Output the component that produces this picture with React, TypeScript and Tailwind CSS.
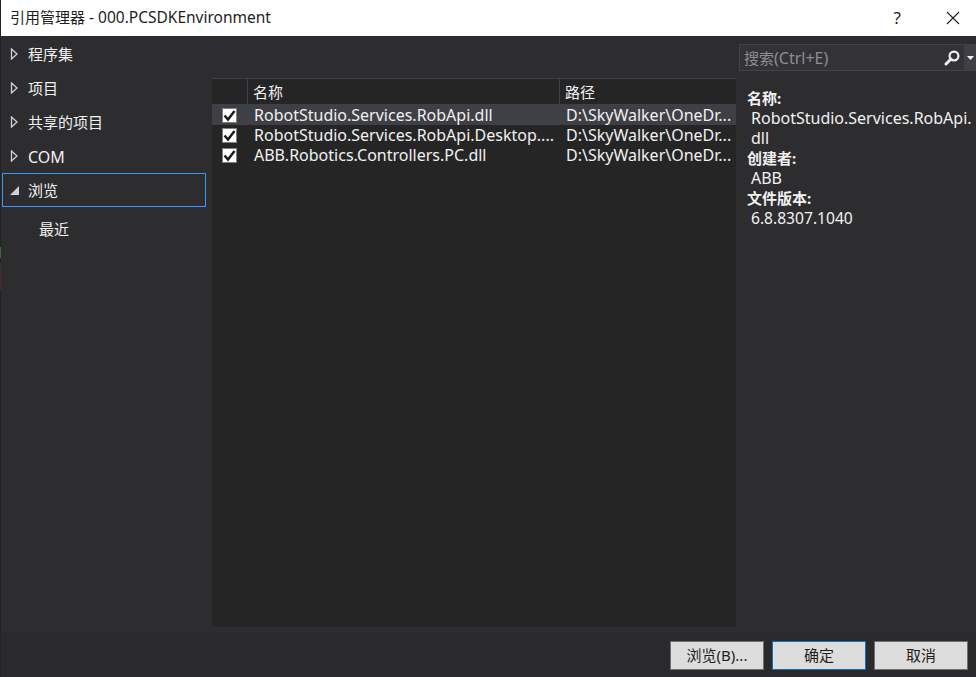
const font = 'font-["Noto_Sans","Noto_Sans_CJK_SC",sans-serif]';

const navItems = ['程序集', '项目', '共享的项目'];

// 列表里的文字按截图原样显示省略号
const rows = [
  { name: 'RobotStudio.Services.RobApi.dll', selected: true },
  { name: 'RobotStudio.Services.RobApi.Desktop....', selected: false },
  { name: 'ABB.Robotics.Controllers.PC.dll', selected: false },
];

function Caret() {
  return (
    <svg width="9" height="12" viewBox="0 0 9 12" className="shrink-0">
      <path d="M1.5 1 L7 6 L1.5 11 Z" fill="none" stroke="#d0d0d0" strokeWidth="1.3" />
    </svg>
  );
}

function NavRow({ label, latin }: { label: string; latin?: boolean }) {
  return (
    <div className="h-[34px] flex items-center pl-[8px] gap-[9px]">
      <Caret />
      <span className={`pt-[1px] ${latin ? 'text-[16px]' : ''}`}>{label}</span>
    </div>
  );
}

function NavList() {
  return (
    <div className="w-[211px] shrink-0 flex flex-col pl-[1px] pr-[6px] pt-[1px]">
      {navItems.map((label) => (
        <NavRow key={label} label={label} />
      ))}
      <NavRow label="COM" latin />
      <div className="h-[34px] flex items-center pl-[7px] gap-[9px] border border-[#3399ff]">
        <svg width="9" height="9" viewBox="0 0 9 9" className="shrink-0">
          <path d="M0 9 L9 9 L9 0 Z" fill="#d0d0d0" />
        </svg>
        <span className="pt-[1px]">浏览</span>
      </div>
      <div className="h-[44px] flex items-center pl-[37px] pt-[1px]">最近</div>
    </div>
  );
}

function FileTable() {
  return (
    <div className="flex-1 min-w-0 flex flex-col bg-[#252526] mt-[42px] mb-[6px]">
      <div className="h-[27px] shrink-0 flex border-t border-b border-[#3f3f46]">
        <div className="w-[36px] shrink-0 border-r border-[#3f3f46]" />
        <div className="w-[312px] shrink-0 border-r border-[#3f3f46] pl-[5px] leading-[26px]">名称</div>
        <div className="flex-1 pl-[5px] leading-[26px]">路径</div>
      </div>
      {rows.map((row) => (
        <div key={row.name} className={`h-[20px] flex items-center text-[16px] whitespace-nowrap ${row.selected ? 'bg-[#3f3f46]' : ''}`}>
          <div className="w-[35px] shrink-0 flex justify-center pr-[1px]">
            <div className="w-[15px] h-[15px] bg-white border border-[#808080] flex items-center justify-center">
              <svg width="13" height="13" viewBox="0 0 13 13">
                <path d="M1.5 6.5 L5 10.5 L11.5 2" fill="none" stroke="#1a1a1a" strokeWidth="2.4" />
              </svg>
            </div>
          </div>
          <div className="w-[312px] shrink-0 pl-[7px]">{row.name}</div>
          <div className="flex-1 min-w-0 pl-[7px]">D:\SkyWalker\OneDr...</div>
        </div>
      ))}
    </div>
  );
}

function DetailPane() {
  return (
    <div className="w-[240px] shrink-0 flex flex-col pl-[3px] pt-[8px]">
      <div className="h-[27px] flex bg-[#333337] border border-[#434346] border-r-0">
        <div className="flex-1 pl-[4px] leading-[26px] text-[#8e8e90]">
          搜索<span className="text-[16px]">(Ctrl+E)</span>
        </div>
        <div className="w-[24px] flex items-center justify-center">
          <svg width="18" height="18" viewBox="0 0 18 18">
            <circle cx="11" cy="7" r="4.4" fill="none" stroke="#f1f1f1" strokeWidth="2.2" />
            <path d="M8 10 L3 15" stroke="#f1f1f1" strokeWidth="3" strokeLinecap="round" />
          </svg>
        </div>
        <div className="w-[12px] bg-[#3f3f46] flex items-center justify-center">
          <svg width="7" height="4" viewBox="0 0 7 4">
            <path d="M0 0 H7 L3.5 4 Z" fill="#f1f1f1" />
          </svg>
        </div>
      </div>
      <div className="pl-[8px] pt-[17px] leading-[20px] whitespace-nowrap">
        <div className="font-bold">名称:</div>
        <div className="pl-[4px] text-[16px]">
          RobotStudio.Services.RobApi.
          <br />
          dll
        </div>
        <div className="font-bold">创建者:</div>
        <div className="pl-[4px] text-[16px]">ABB</div>
        <div className="font-bold">文件版本:</div>
        <div className="pl-[4px] text-[15.6px]">6.8.8307.1040</div>
      </div>
    </div>
  );
}

function FooterButton({ label, primary }: { label: string; primary?: boolean }) {
  return (
    <button
      className={`w-[94px] h-[29px] bg-[#dddddd] text-[#1e1e1e] border ${primary ? 'border-[#0e70c0]' : 'border-[#707070]'}`}
    >
      {label}
    </button>
  );
}

export default function App() {
  return (
    <div className={`w-[976px] h-[677px] flex bg-[#2d2d30] text-[#f1f1f1] text-[15px] overflow-hidden ${font}`}>
      <div className="w-px shrink-0 flex flex-col bg-[#232325]">
        <div className="h-[247px] shrink-0" />
        <div className="h-[11px] shrink-0 bg-[#3a6b3a]" />
        <div className="h-[5px] shrink-0" />
        <div className="h-[27px] shrink-0 bg-[#4a2b2b]" />
      </div>
      <div className="flex-1 min-w-0 flex flex-col">
        <div className="h-[36px] shrink-0 bg-white text-[#1e1e1e] flex items-center pl-[9px] pr-[11px]">
          <span className="flex-1">
            引用管理器<span className="text-[15.5px]"> - 000.PCSDKEnvironment</span>
          </span>
          <span className="mr-[40px] text-[17px]">?</span>
          <svg width="24" height="24" viewBox="0 0 24 24" className="shrink-0">
            <path d="M6 6 L18 18 M18 6 L6 18" stroke="#1e1e1e" strokeWidth="1.1" />
          </svg>
        </div>
        <div className="h-[597px] shrink-0 flex">
          <NavList />
          <FileTable />
          <DetailPane />
        </div>
        <div className="flex-1 bg-[#2a2a2c] flex justify-end items-start gap-[8px] pt-[8px] pr-[8px]">
          <FooterButton label="浏览(B)..." />
          <FooterButton label="确定" primary />
          <FooterButton label="取消" />
        </div>
      </div>
    </div>
  );
}
